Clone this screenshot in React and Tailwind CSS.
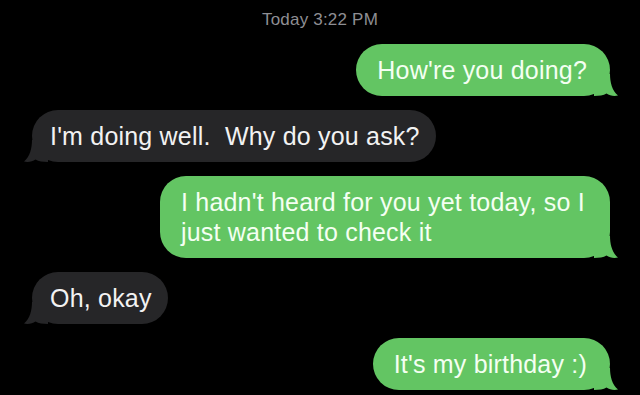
import React from 'react';

const messages = [
  { id: 1, me: true, text: "How're you doing?" },
  { id: 2, me: false, text: "I'm doing well.  Why do you ask?" },
  { id: 3, me: true, text: "I hadn't heard for you yet today, so I just wanted to check it" },
  { id: 4, me: false, text: 'Oh, okay' },
  { id: 5, me: true, text: "It's my birthday :)" },
];

function Tail({ me }) {
  return (
    <svg
      width="24"
      height="22"
      viewBox="0 0 24 22"
      className={
        me
          ? 'absolute bottom-0 right-[-8px] text-[#63c563]'
          : 'absolute bottom-0 left-[-8px] -scale-x-100 text-[#262628]'
      }
    >
      <path
        d="M0 0 H16 C16 8 18 16.5 24 21.6 C19.5 22.4 15.5 21.6 12.5 19.6 C9.5 21.4 5 22 0 22 Z"
        fill="currentColor"
      />
    </svg>
  );
}

function Bubble({ me, text }) {
  return (
    <div className={me ? 'flex justify-end' : 'flex justify-start'}>
      <div
        className={
          me
            ? 'relative max-w-[450px] rounded-[26px] bg-[#63c563] py-[11px] pl-[21px] pr-[23px] text-[#f4fff2]'
            : 'relative max-w-[450px] rounded-[26px] bg-[#262628] pl-[18px] pr-[16px] py-[11px] text-[#f2f2f2]'
        }
      >
        <Tail me={me} />
        <p className="relative whitespace-pre-wrap text-[25px] leading-[30px] tracking-[0.2px]">{text}</p>
      </div>
    </div>
  );
}

export default function App() {
  return (
    <div className="h-[395px] w-[640px] overflow-hidden bg-black font-['Liberation_Sans',Arial,sans-serif]">
      <div className="pt-[10px] text-center text-[17px] leading-[20px] tracking-[0.2px] text-[#8e8e93]">
        Today 3:22 PM
      </div>
      <div className="mt-[14px] flex flex-col gap-[14px] pl-[32px] pr-[30px]">
        {messages.map((m) => (
          <Bubble key={m.id} me={m.me} text={m.text} />
        ))}
      </div>
    </div>
  );
}
